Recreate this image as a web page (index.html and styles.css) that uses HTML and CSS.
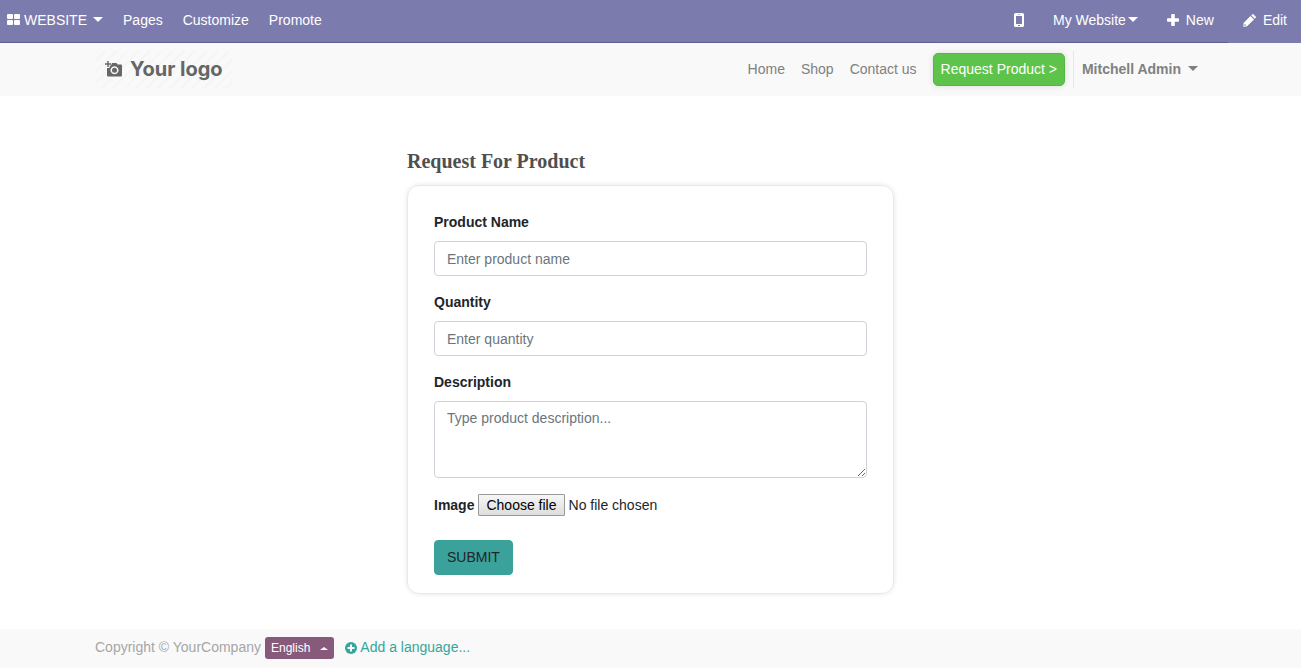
FILE: index.html
```html
<!DOCTYPE html>
<html lang="en">
<head>
    <meta charset="utf-8">
    <meta name="viewport" content="width=device-width, initial-scale=1">
    <title>Request For Product</title>
    <link rel="stylesheet" href="styles.css">
</head>
<body>
    <nav class="topbar">
        <div class="topbar-menu">
            <button class="topbar-item brand" type="button">
                <svg width="14" height="12" viewBox="0 0 14 12" fill="currentColor">
                    <rect x="0" y="0" width="6" height="5" rx="1"/>
                    <rect x="7" y="0" width="6" height="5" rx="1"/>
                    <rect x="0" y="6" width="6" height="5" rx="1"/>
                    <rect x="7" y="6" width="6" height="5" rx="1"/>
                </svg>
                <span>WEBSITE</span>
                <span class="caret spaced"></span>
            </button>
            <a class="topbar-item" href="#">Pages</a>
            <a class="topbar-item" href="#">Customize</a>
            <a class="topbar-item" href="#">Promote</a>
        </div>
        <div class="topbar-tools">
            <button class="topbar-item tool" type="button" aria-label="Mobile preview">
                <svg width="10" height="14" viewBox="0 0 10 14">
                    <path fill="currentColor" fill-rule="evenodd" d="M1.500 0h7a1.500 1.500 0 0 1 1.500 1.500v11a1.500 1.500 0 0 1-1.500 1.500h-7a1.500 1.500 0 0 1-1.500-1.500v-11a1.500 1.500 0 0 1 1.500-1.500zM2 3v8h6v-8zM4 1.200v.6h2v-.6zM4 12v1h2v-1z"/>
                </svg>
            </button>
            <button class="topbar-item tool" type="button">My Website<span class="caret near"></span></button>
            <button class="topbar-item tool icon-tool" type="button">
                <svg width="12" height="12" viewBox="0 0 12 12" fill="currentColor">
                    <path d="M5 0h2q.8 0 .8.800v3.400h3.400q.8 0 .8.800v2q0 .8-.8.800h-3.400v3.400q0 .8-.8.800h-2q-.8 0-.8-.800v-3.400h-3.400q-.8 0-.8-.800v-2q0-.8.8-.800h3.400v-3.400q0-.8.8-.800z"/>
                </svg>
                New
            </button>
            <button class="topbar-item tool icon-tool edit" type="button">
                <svg width="13" height="13" viewBox="0 0 13 13" fill="currentColor">
                    <path d="M7.500 2l3.500 3.500-7.200 7-3.500.3.3-3.700zM1.600 9.800l-.2 1.900 1.900-.2z" fill-rule="evenodd"/>
                    <path d="M8.200 1.300l.9-.9q.8-.7 1.500 0l2 2q.7.700 0 1.500l-.9.900z"/>
                </svg>
                Edit
            </button>
        </div>
    </nav>

    <header class="site-header">
        <div class="container header-row">
            <a class="logo" href="#">
                <svg width="17" height="17" viewBox="0 0 17 17">
                    <path fill="currentColor" fill-rule="evenodd" d="M7 2h4.500l1 1.500h3.500q1 0 1 1v10q0 1-1 1h-13q-1 0-1-1v-7.500h2q.8 0 .8-.8v-1.700h1.200zM9.500 5.300a4 4 0 1 0 .01 0z"/>
                    <circle cx="9.500" cy="9.300" r="2.500" fill="currentColor"/>
                    <path fill="none" stroke="currentColor" stroke-width="1.400" d="M3 0v6M0 3h6"/>
                </svg>
                Your logo
            </a>
            <div class="site-menu">
                <a class="menu-link" href="#">Home</a>
                <a class="menu-link" href="#">Shop</a>
                <a class="menu-link" href="#">Contact us</a>
                <a class="request-btn" href="#">Request Product &gt;</a>
                <button class="user-menu" type="button">Mitchell Admin<span class="caret spaced"></span></button>
            </div>
        </div>
    </header>

    <main class="content">
        <h1>Request For Product</h1>
        <form class="card">
            <div class="form-group">
                <label for="name">Product Name</label>
                <input class="form-control" type="text" id="name" placeholder="Enter product name">
            </div>
            <div class="form-group">
                <label for="quantity">Quantity</label>
                <input class="form-control" type="text" id="quantity" placeholder="Enter quantity">
            </div>
            <div class="form-group">
                <label for="description">Description</label>
                <textarea class="form-control" id="description" placeholder="Type product description..."></textarea>
            </div>
            <div class="file-group">
                <label for="image">Image</label>
                <div class="file-picker">
                    <span class="file-btn">Choose file</span>
                    <span>No file chosen</span>
                    <input type="file" id="image">
                </div>
            </div>
            <button class="submit" type="submit">SUBMIT</button>
        </form>
    </main>

    <footer class="site-footer">
        <div class="container footer-row">
            <span class="copyright">Copyright © YourCompany</span>
            <button class="lang-btn" type="button">English<span class="caret up"></span></button>
            <a class="add-lang" href="#">
                <svg width="12" height="12" viewBox="0 0 12 12">
                    <circle cx="6" cy="6" r="6" fill="currentColor"/>
                    <path d="M6 2.500v7M2.500 6h7" stroke="#f9f9f9" stroke-width="2"/>
                </svg>
                Add a language...
            </a>
        </div>
    </footer>
</body>
</html>
```
FILE: styles.css
```css
* {
    box-sizing: border-box;
}
body {
    display: flex;
    flex-direction: column;
    min-height: 100vh;
    margin: 0;
    font-family: "Liberation Sans", Arial, sans-serif;
    font-size: 14px;
    line-height: 21px;
    color: #212529;
    background-color: #fff;
}
a {
    text-decoration: none;
}
button, input, textarea {
    font: inherit;
    margin: 0;
}
button {
    cursor: pointer;
}
svg {
    flex: none;
}
.container {
    width: 100%;
    max-width: 1141px;
    margin: 0 auto;
    padding: 0 15px;
}
.caret {
    display: inline-block;
    margin-bottom: 2px;
    border-top: 5px solid;
    border-left: 5px solid transparent;
    border-right: 5px solid transparent;
}
.caret.spaced {
    margin-left: 7px;
}
.caret.near {
    margin-left: 2px;
}

/* editor bar */
.topbar {
    display: flex;
    justify-content: space-between;
    height: 43px;
    background-color: #7c7bad;
}
.topbar-menu, .topbar-tools {
    display: flex;
}
.topbar-menu {
    flex-grow: 1;
    border-bottom: 1px solid #5f5e97;
}
.topbar-item {
    display: flex;
    align-items: center;
    padding: 0 10px 2px;
    border: 0;
    border-bottom: 1px solid #5f5e97;
    color: #fff;
    background: none;
}
.topbar-menu .topbar-item {
    border-bottom: 0;
}
.brand {
    gap: 3px;
    padding-left: 7px;
}
.brand .caret {
    margin-left: 3px;
}
.topbar .tool {
    padding-left: 15px;
    padding-right: 14px;
}
.icon-tool {
    gap: 7px;
}
.topbar .edit {
    border-bottom-color: #7c7bad;
}

/* site header */
.site-header {
    padding: 8px 0;
    background-color: #f9f9f9;
}
.header-row {
    display: flex;
    flex-wrap: wrap;
    justify-content: space-between;
    align-items: center;
}
.logo {
    display: flex;
    align-items: center;
    gap: 8px;
    height: 37px;
    padding: 0 10px 1px;
    font-family: Inter, sans-serif;
    font-size: 20px;
    font-weight: 700;
    color: #666;
    background: repeating-linear-gradient(135deg, #f9f9f9 0, #f9f9f9 6px, #f5f5f5 6px, #f5f5f5 8px);
}
.site-menu {
    display: flex;
    align-items: center;
}
.menu-link {
    padding: 8px;
    color: #808080;
}
.request-btn {
    margin: 0 8px;
    padding: 5px 7px;
    border: 1px solid #53b840;
    border-radius: 5px;
    color: #fff;
    background-color: #5dc34a;
    box-shadow: 0 0 6px rgba(0, 0, 0, 0.12);
}
.user-menu {
    display: flex;
    align-items: center;
    height: 37px;
    padding: 0 8px;
    border: 0;
    border-left: 1px solid #e6e6e6;
    font-weight: bold;
    color: #808080;
    background: none;
}

/* request form */
.content {
    flex-grow: 1;
    width: 100%;
    max-width: 487px;
    margin: 0 auto;
    padding: 50px 0 35px;
}
h1 {
    margin: 0 0 9px;
    font-family: "Liberation Serif", "Times New Roman", serif;
    font-size: 20px;
    line-height: 30px;
    color: #4f4f4f;
}
.card {
    padding: 26px 26px 18px;
    border: 1px solid #e8e8e8;
    border-radius: 12px;
    box-shadow: 0 0 5px rgba(0, 0, 0, 0.1);
}
label {
    font-weight: bold;
}
.form-group {
    display: flex;
    flex-direction: column;
    gap: 8px;
    margin-bottom: 16px;
}
.form-control {
    width: 100%;
    height: 35px;
    padding: 6px 12px;
    border: 1px solid #ced4da;
    border-radius: 4px;
    color: #495057;
    background-color: #fff;
}
.form-control::placeholder {
    color: #6c757d;
}
textarea.form-control {
    height: 77px;
    resize: vertical;
}
.file-group {
    display: flex;
    align-items: center;
    gap: 4px;
    margin-bottom: 24px;
}
.file-picker {
    position: relative;
    display: flex;
    align-items: center;
    gap: 4px;
}
.file-btn {
    padding: 0 7px;
    border: 1px solid #999;
    border-radius: 1px;
    line-height: 20px;
    color: #000;
    background-image: linear-gradient(#f6f6f6, #dddddd);
}
/* the native picker lies on top and takes the click */
.file-picker input {
    position: absolute;
    inset: 0;
    width: 100%;
    height: 100%;
    opacity: 0;
}
.submit {
    padding: 6px 12px;
    border: 1px solid #3aa19b;
    border-radius: 4px;
    color: #212529;
    background-color: #3aa19b;
}

/* footer */
.site-footer {
    padding: 8px 0 9px;
    background-color: #f9f9f9;
}
.footer-row {
    display: flex;
    align-items: flex-start;
    flex-wrap: wrap;
}
.copyright {
    color: #a6a6a6;
}
.lang-btn {
    display: flex;
    align-items: center;
    gap: 10px;
    margin: 0 11px 0 4px;
    padding: 0 6px;
    border: 0;
    border-radius: 3px;
    font-size: 12px;
    line-height: 22px;
    color: #fff;
    background-color: #875a7b;
}
.caret.up {
    margin-bottom: 0;
    border-top: 0;
    border-bottom: 3px solid;
    border-left-width: 4px;
    border-right-width: 4px;
}
.add-lang {
    display: flex;
    align-items: center;
    gap: 3px;
    color: #35a69c;
}
```
